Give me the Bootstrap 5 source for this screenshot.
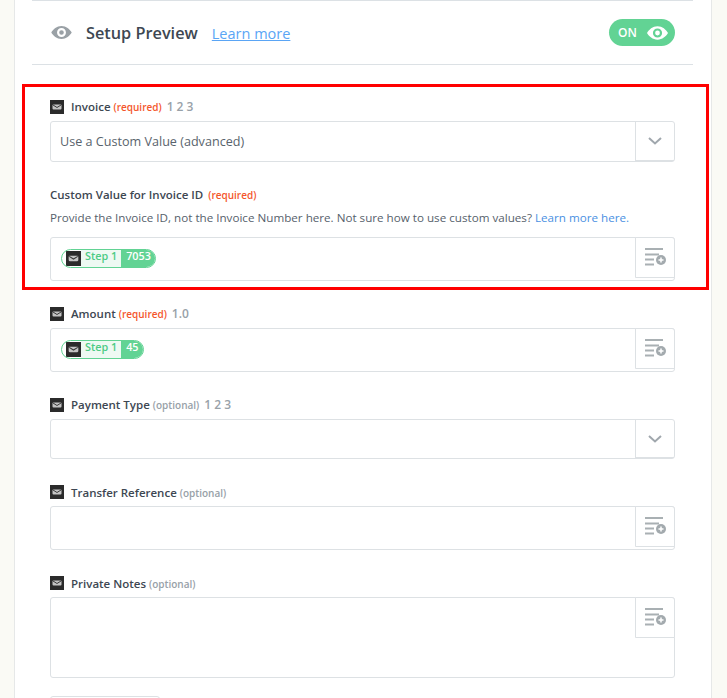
<!DOCTYPE html>
<html lang="en">
<head>
    <meta charset="UTF-8">
    <meta name="viewport" content="width=device-width, initial-scale=1.0">
    <title>Setup Preview</title>
    <link href="https://cdn.jsdelivr.net/npm/bootstrap@5.3.2/dist/css/bootstrap.min.css" rel="stylesheet">
    <script src="https://cdn.jsdelivr.net/npm/bootstrap@5.3.2/dist/js/bootstrap.bundle.min.js"></script>
    <style>
        html, body {
            height: 698px;
            overflow: hidden;
        }
        body {
            font-family: "Open Sans", "Liberation Sans", sans-serif;
            background-color: #fafaf5;
            color: #3d4752;
        }
        .panel {
            width: 698px;
            height: 698px;
            margin-left: 14px;
            padding: 0 18px 0 17px;
            background-color: #fff;
            border-left: 1px solid #e6e8e8;
            border-right: 1px solid #e6e8e8;
            overflow: hidden;
        }
        .preview-head {
            height: 65px;
            padding: 0 18px 0 19px;
            border-top: 1px solid #dce1e5;
            border-bottom: 1px solid #dce1e5;
        }
        .preview-title {
            font-size: 16.3px;
            font-weight: 600;
            margin: 2px 14px 0 14px;
            color: #3d4752;
        }
        .learn-top {
            font-size: 14.5px;
            color: #5aa5f5;
            margin-top: 2px;
        }
        .on-pill {
            width: 66px;
            height: 27px;
            border-radius: 14px;
            background-color: #62d394;
            color: #fff;
            font-size: 12px;
            font-weight: 600;
            padding: 0 7px 0 9px;
        }
        .red-frame {
            margin: 19px -16px 0 -10px;
            padding: 13px 31px 6px 25px;
            border: 3px solid #f00;
        }
        .plain-fields {
            padding: 17px 18px 0;
        }
        .app-icon {
            width: 14px;
            height: 14px;
            flex: none;
            display: block;
        }
        .field-label {
            height: 14px;
            margin-bottom: 7px;
            font-size: 11.5px;
            font-weight: 600;
            white-space: nowrap;
        }
        .field-label .app-icon {
            margin-right: 7px;
        }
        .label-text {
            line-height: 16px;
        }
        .label-raised {
            line-height: 14px;
        }
        .req {
            color: #f4562c;
            font-size: 10px;
            margin-left: 3px;
        }
        .opt {
            color: #98a1a8;
            font-size: 10px;
            margin-left: 3px;
        }
        .choices {
            color: #98a1a8;
            font-size: 12px;
            margin-left: 5px;
        }
        .picker {
            height: 41px;
            border: 1px solid #dde1e4;
            border-radius: 3px;
            font-size: 12.6px;
            color: #59636c;
            padding-left: 9px;
        }
        .picker-text {
            padding-top: 1px;
        }
        .picker-short {
            height: 40px;
        }
        .picker-btn {
            width: 39px;
            align-self: stretch;
            border-left: 1px solid #dde1e4;
            border-bottom: 1px solid #dde1e4;
            margin-left: auto;
        }
        .value-box {
            height: 44px;
            border: 1px solid #dde1e4;
            border-radius: 3px;
            padding: 10px 0 0 10px;
        }
        .notes-box {
            height: 81px;
        }
        .map-btn {
            position: absolute;
            top: -1px;
            right: -1px;
            width: 40px;
            height: 41px;
            padding-bottom: 2px;
            border: 1px solid #dde1e4;
            border-radius: 0 3px 0 0;
            background-color: #fff;
        }
        .sub-label {
            font-size: 11.5px;
            font-weight: 600;
            line-height: 16px;
            margin-top: 25px;
        }
        .sub-label .req {
            margin-left: 2px;
        }
        .help-line {
            font-size: 11.65px;
            line-height: 18px;
            margin: 6px 0 10px;
            color: #56616b;
            white-space: nowrap;
        }
        .help-line a {
            color: #4a90e2;
            text-decoration: none;
        }
        .step-token {
            height: 19px;
            border: 1px solid #62d394;
            border-radius: 10px;
            font-size: 10.8px;
            font-weight: 600;
            line-height: 12px;
            overflow: hidden;
            background-color: #fff;
            padding-left: 4px;
        }
        .step-token .app-icon {
            width: 15px;
            height: 15px;
        }
        .step-name {
            color: #4ccb85;
            background-color: #eef9f3;
            padding: 0 4px;
            height: 17px;
        }
        .step-val {
            color: #fff;
            background-color: #62d394;
            padding: 0 4px 0 5px;
            height: 17px;
        }
        .gap-after {
            margin-bottom: 26px;
        }
        .more-btn {
            width: 110px;
            height: 30px;
            margin-top: 18px;
            border: 1px solid #dde1e4;
            border-radius: 3px;
        }
    </style>
</head>
<body>
    <svg width="0" height="0" class="d-block position-absolute">
        <symbol id="mail-app" viewBox="0 0 14 14">
            <rect width="14" height="14" fill="#2b2b2b"/>
            <rect x="2.500" y="4.500" width="9" height="5" rx="1" fill="#c4c4c4"/>
            <path d="M3 5l4 2.500L11 5" fill="none" stroke="#3a3a3a"/>
        </symbol>
        <symbol id="eye" viewBox="0 0 22 14">
            <path fill-rule="evenodd" d="M11 0c5 0 9 3.600 11 7-2 3.400-6 7-11 7S2 10.400 0 7c2-3.400 6-7 11-7zm0 2.200a4.800 4.800 0 1 0 0 9.600 4.800 4.800 0 0 0 0-9.600zm0 2.300a2.500 2.500 0 1 1 0 5 2.500 2.500 0 0 1 0-5z"/>
        </symbol>
        <symbol id="chevron" viewBox="0 0 14 8">
            <path d="M1 1l6 5.500L13 1" fill="none" stroke="#a0a7ad" stroke-width="2"/>
        </symbol>
        <symbol id="map-field" viewBox="0 0 21 18">
            <path d="M0 1h18M0 6.500h14M0 11.500h9M0 16.500h9" stroke="#a9b0b3" stroke-width="2"/>
            <circle cx="16" cy="12" r="5" fill="#a3aaae"/>
            <path d="M13.500 12h5M16 9.500v5" stroke="#fff" stroke-width="1.500"/>
        </symbol>
    </svg>

    <div class="panel">
        <div class="preview-head d-flex align-items-center">
            <svg width="21" height="13" fill="#9aa1a6"><use href="#eye"/></svg>
            <h2 class="preview-title">Setup Preview</h2>
            <a href="#" class="learn-top">Learn more</a>
            <div class="on-pill d-flex align-items-center justify-content-between ms-auto">
                <span>ON</span>
                <svg width="21" height="14" fill="#fff"><use href="#eye"/></svg>
            </div>
        </div>

        <div class="red-frame">
            <div class="field-label d-flex">
                <svg class="app-icon"><use href="#mail-app"/></svg>
                <div class="label-text label-raised">Invoice<span class="req">(required)</span><span class="choices">1 2 3</span></div>
            </div>
            <div class="picker d-flex align-items-center">
                <span class="picker-text">Use a Custom Value (advanced)</span>
                <div class="picker-btn d-flex align-items-center justify-content-center">
                    <svg width="14" height="8"><use href="#chevron"/></svg>
                </div>
            </div>
            <div class="sub-label">Custom Value for Invoice ID <span class="req">(required)</span></div>
            <p class="help-line">Provide the Invoice ID, not the Invoice Number here. Not sure how to use custom values? <a href="#">Learn more here.</a></p>
            <div class="value-box position-relative">
                <div class="step-token d-inline-flex align-items-center">
                    <svg class="app-icon"><use href="#mail-app"/></svg>
                    <span class="step-name">Step 1</span><span class="step-val">7053</span>
                </div>
                <div class="map-btn d-flex align-items-center justify-content-center">
                    <svg width="21" height="18"><use href="#map-field"/></svg>
                </div>
            </div>
        </div>

        <div class="plain-fields">
            <div class="field-label d-flex">
                <svg class="app-icon"><use href="#mail-app"/></svg>
                <div class="label-text label-raised">Amount<span class="req">(required)</span><span class="choices">1.0</span></div>
            </div>
            <div class="value-box position-relative gap-after">
                <div class="step-token d-inline-flex align-items-center">
                    <svg class="app-icon"><use href="#mail-app"/></svg>
                    <span class="step-name">Step 1</span><span class="step-val">45</span>
                </div>
                <div class="map-btn d-flex align-items-center justify-content-center">
                    <svg width="21" height="18"><use href="#map-field"/></svg>
                </div>
            </div>

            <div class="field-label d-flex">
                <svg class="app-icon"><use href="#mail-app"/></svg>
                <div class="label-text label-raised">Payment Type<span class="opt">(optional)</span><span class="choices">1 2 3</span></div>
            </div>
            <div class="picker picker-short d-flex align-items-center gap-after">
                <div class="picker-btn d-flex align-items-center justify-content-center">
                    <svg width="14" height="8"><use href="#chevron"/></svg>
                </div>
            </div>

            <div class="field-label d-flex">
                <svg class="app-icon"><use href="#mail-app"/></svg>
                <div class="label-text">Transfer Reference<span class="opt">(optional)</span></div>
            </div>
            <div class="value-box position-relative gap-after">
                <div class="map-btn d-flex align-items-center justify-content-center">
                    <svg width="21" height="18"><use href="#map-field"/></svg>
                </div>
            </div>

            <div class="field-label d-flex">
                <svg class="app-icon"><use href="#mail-app"/></svg>
                <div class="label-text">Private Notes<span class="opt">(optional)</span></div>
            </div>
            <div class="value-box notes-box position-relative">
                <div class="map-btn d-flex align-items-center justify-content-center">
                    <svg width="21" height="18"><use href="#map-field"/></svg>
                </div>
            </div>
            <div class="more-btn"></div>
        </div>
    </div>
</body>
</html>
